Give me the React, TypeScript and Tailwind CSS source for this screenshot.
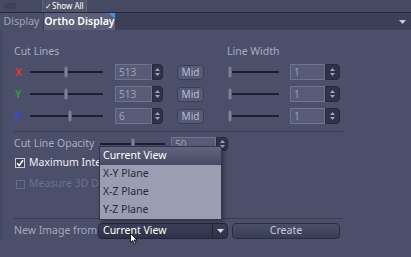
import React from 'react';

const Spinner = ({ w = 'w-[11px]' }: { w?: string }) => (
  <div className={`${w} h-full bg-[#2f3249] rounded-r-[4px] border border-[#262939] flex flex-col items-center justify-center gap-[2px]`}>
    <svg width="5" height="3" viewBox="0 0 5 3"><path d="M0 3 L2.5 0 L5 3 Z" fill="#9ea2b8" /></svg>
    <svg width="5" height="3" viewBox="0 0 5 3"><path d="M0 0 L2.5 3 L5 0 Z" fill="#9ea2b8" /></svg>
  </div>
);

const Slider = ({ w, thumb }: { w: string; thumb: number }) => (
  <div className={`${w} relative h-[14px] flex items-center`}>
    <div className="w-full h-[2px] bg-[#1c1f30]" />
    <div
      className="absolute top-[1px] w-[4px] h-[12px] rounded-[2px] bg-[#7f839c] border border-[#5e627b]"
      style={{ left: thumb }}
    />
  </div>
);

const NumBox = ({ value, w, spin, h = 'h-[16px]' }: { value: string; w: string; spin?: string; h?: string }) => (
  <div className={`flex ${h}`}>
    <div className={`${w} h-full bg-[#575b76] border border-[#6f7390] px-[3px] flex items-center text-[10px] text-[#9ca0b8]`}>
      {value}
    </div>
    <Spinner w={spin} />
  </div>
);

const MidBtn = () => (
  <div className="ml-[14px] w-[27px] h-[15px] rounded-[4px] bg-[#565a75] border border-[#3c3f56] flex items-center justify-center text-[10px] text-[#b8bcd0]">
    Mid
  </div>
);

const axes = [
  { l: 'X', c: 'text-[#e0303a]', v: '513', t: 34 },
  { l: 'Y', c: 'text-[#2e9a3c]', v: '513', t: 34 },
  { l: 'Z', c: 'text-[#3148e0]', v: '6', t: 38 },
];

export default function App() {
  return (
    <div
      className="relative w-[411px] h-[257px] overflow-hidden bg-[#4b4f69] text-[#a9adc3] text-[10px]"
      style={{ fontFamily: '"Noto Sans", "Open Sans", sans-serif' }}
    >
      {/* top toolbar */}
      <div className="h-[12px] bg-[#454961] flex items-center">
        <div className="ml-[4px] w-[12px] h-[6px] rounded-full bg-[#3d4058]" />
        <div className="ml-[26px] w-[45px] h-[12px] bg-[#50546d] border-x border-[#5f637c] flex items-center pl-[2px] text-[8px] text-white leading-none">
          ✓Show All
        </div>
      </div>

      {/* tab bar */}
      <div className="h-[18px] bg-[#3b3f57] border-t border-[#22253a] flex items-stretch">
        <div className="w-[43px] bg-[#4a4e66] flex items-center justify-center text-[10.5px] text-[#a0a4ba]">Display</div>
        <div className="relative ml-[1px] w-[71px] bg-[#5b5f79] flex items-center justify-center text-[10.5px] font-semibold text-white">
          Ortho Display
          <svg className="absolute right-0 top-0" width="6" height="6" viewBox="0 0 6 6"><path d="M0 0 L6 0 L6 6 Z" fill="#4b8de8" /></svg>
        </div>
        <div className="flex-1" />
        <div className="w-[12px] flex items-center">
          <svg width="7" height="4" viewBox="0 0 7 4"><path d="M0 0 L7 0 L3.5 4 Z" fill="#c8cbdc" /></svg>
        </div>
      </div>

      {/* panel */}
      <div className="pl-[14px] pt-[15px] border-l-[3px] border-[#464a63]">
        <div className="flex -ml-[3px]">
          <div className="w-[213px]">
            <div className="h-[14px] flex items-center text-[10.5px]">Cut Lines</div>
            <div className="mt-[2px]">
              {axes.map(a => (
                <div key={a.l} className="h-[22px] flex items-center">
                  <div className={`w-[16px] pl-[1px] font-bold text-[10px] ${a.c}`}>{a.l}</div>
                  <Slider w="w-[73px]" thumb={a.t} />
                  <div className="ml-[12px]">
                    <NumBox value={a.v} w="w-[37px]" />
                  </div>
                  <MidBtn />
                </div>
              ))}
            </div>
          </div>
          <div>
            <div className="h-[14px] flex items-center text-[10.5px]">Line Width</div>
            <div className="mt-[2px]">
              {[0, 1, 2].map(i => (
                <div key={i} className="h-[22px] flex items-center">
                  <div className="ml-[1px]">
                    <Slider w="w-[51px]" thumb={0} />
                  </div>
                  <div className="ml-[11px]">
                    <NumBox value="1" w="w-[35px]" spin="w-[15px]" />
                  </div>
                </div>
              ))}
            </div>
          </div>
        </div>

        <div className="-ml-[3px] mt-[4px] w-[329px] h-[1px] bg-[#3a3d54]" />

        <div className="-ml-[3px] mt-[2px] h-[20px] flex items-center">
          <div className="w-[86px] text-[10.5px]">Cut Line Opacity</div>
          <Slider w="w-[65px]" thumb={31} />
          <div className="ml-[6px]">
            <NumBox value="50" w="w-[45px]" spin="w-[12px]" h="h-[14px]" />
          </div>
        </div>

        <div className="-ml-[3px] mt-[1px] h-[16px] flex items-center">
          <div className="ml-[1px] w-[10px] h-[10px] shrink-0 border border-[#c9ccdb] bg-[#3f425a] flex items-center justify-center">
            <svg width="8" height="8" viewBox="0 0 8 8"><path d="M1 4.2 L3.2 6.4 L7 1.2" stroke="#ffffff" strokeWidth="1.6" fill="none" /></svg>
          </div>
          <div className="ml-[4px] w-[70px] overflow-hidden text-[10.5px] text-[#eceef5] whitespace-nowrap">Maximum Intensity Projection</div>
        </div>

        <div className="-ml-[3px] mt-[5px] h-[16px] flex items-center">
          <div className="ml-[2px] w-[9px] h-[9px] shrink-0 border border-[#676b86]" />
          <div className="ml-[4px] w-[70px] overflow-hidden text-[10.5px] text-[#6c708b] whitespace-nowrap">Measure 3D Distance</div>
        </div>

        <div className="-ml-[3px] mt-[26px] w-[329px] h-[1px] bg-[#3a3d54]" />

        <div className="-ml-[3px] mt-[3px] h-[18px] flex items-center">
          <div className="w-[84px] text-[10.5px] text-[#a3a7be]">New Image from</div>
          <div className="w-[130px] h-[16px] rounded-[4px] border border-[#23263a] bg-gradient-to-b from-[#3c4058] to-[#2e3147] flex items-stretch">
            <div className="flex-1 pl-[4px] flex items-center text-[10.5px] text-white">Current View</div>
            <div className="w-[15px] border-l border-[#23263a] flex items-center justify-center">
              <svg width="7" height="4" viewBox="0 0 7 4"><path d="M0 0 L7 0 L3.5 4 Z" fill="#d8dbe8" /></svg>
            </div>
          </div>
          <div className="ml-[4px] w-[108px] h-[16px] rounded-[4px] border border-[#2a2d42] bg-gradient-to-b from-[#4a4e68] to-[#383c54] flex items-center justify-center text-[10.5px] text-[#c8cbe0]">
            Create
          </div>
        </div>
      </div>

      {/* open dropdown list */}
      <div className="absolute left-[99px] top-[146px] w-[123px] rounded-tr-[3px] border border-[#34374c] shadow-[2px_2px_4px_rgba(0,0,0,0.35)] overflow-hidden">
        <div className="h-[18px] pl-[3px] flex items-center bg-gradient-to-b from-[#60647f] to-[#464a65] text-[10.5px] text-white">
          Current View
        </div>
        {['X-Y Plane', 'X-Z Plane', 'Y-Z Plane'].map(p => (
          <div key={p} className="h-[18px] pl-[3px] flex items-center bg-[#9b9eb3] text-[10.5px] text-[#262a3c]">
            {p}
          </div>
        ))}
      </div>

      {/* mouse cursor */}
      <svg className="absolute left-[130px] top-[233px]" width="8" height="12" viewBox="0 0 8 12">
        <path d="M0.5 0.5 L0.5 9.5 L2.7 7.5 L4.3 11 L5.6 10.4 L4.1 7 L7 7 Z" fill="#ffffff" stroke="#000000" strokeWidth="0.8" />
      </svg>
    </div>
  );
}
